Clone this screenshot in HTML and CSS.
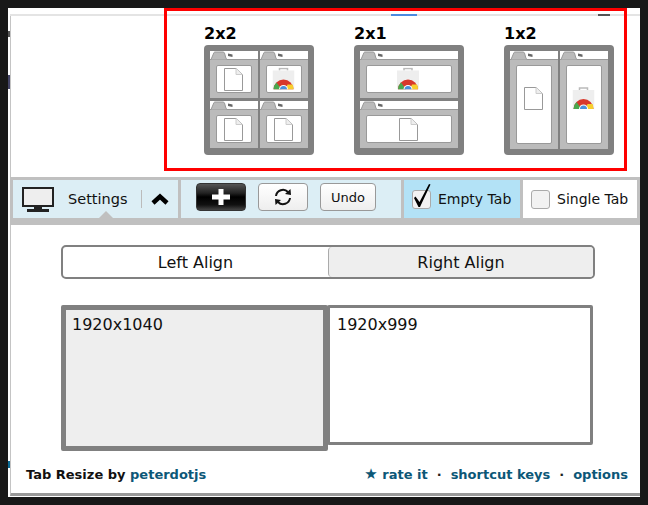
FILE: index.html
```html
<!DOCTYPE html>
<html>
<head>
  <title>Tab Resize</title>
  <link rel="stylesheet" href="styles.css">
</head>
<body>
  <svg class="defs" width="0" height="0">
    <symbol id="head" viewBox="0 0 48 9" width="48" height="9">
      <rect width="48" height="9" fill="#fff"/>
      <rect y="8" width="48" height="1" fill="#999"/>
      <path d="M0 9 L1 8.5 L4 1.5 Q4.5 1 5 1 L13 1 Q14 1 14.5 2 L16 7.5 L18 9 Z" fill="#bbb" stroke="#999"/>
      <path d="M18 2.500 L22.500 3.500 L22.500 6 L18 5 Z" fill="#666"/>
    </symbol>
    <symbol id="page" viewBox="0 0 19 23" width="19" height="23">
      <path d="M.5 .5 H12 L18.5 6.5 V22.5 H.5 Z" fill="#fff" stroke="#999"/>
      <path d="M12 .5 V6.5 H18.5" fill="#eee" stroke="#ccc"/>
    </symbol>
    <symbol id="store" viewBox="0 0 22 22" width="22" height="22">
      <path d="M7 3 V1 H15 V3" fill="none" stroke="#bbb" stroke-width="1.5"/>
      <rect y="3" width="22" height="19" fill="#eee"/>
      <path d="M1 22 A10 10 0 0 1 21 22 Z" fill="#d8382c"/>
      <path d="M1 22 A10 10 0 0 1 4 15 L9 22 Z" fill="#4aa84e"/>
      <path d="M21 22 H13 L15 17 H20 Q21 19 21 22 Z" fill="#f7cf2e"/>
      <path d="M6.5 22 A4.5 4.5 0 0 1 15.5 22 Z" fill="#fff"/>
      <path d="M7.5 22 A3.5 3.5 0 0 1 14.5 22 Z" fill="#4a90dc"/>
    </symbol>
    <symbol id="pane" viewBox="0 0 48 47" width="48" height="47">
      <rect width="48" height="47" fill="#bbb"/>
      <use href="#head"/>
      <rect x="6.5" y="14.5" width="35" height="27" rx="1.5" fill="#fff" stroke="#999"/>
    </symbol>
    <symbol id="wide" viewBox="0 0 98 47" width="98" height="47">
      <rect width="98" height="47" fill="#bbb"/>
      <rect width="98" height="9" fill="#fff"/>
      <rect y="8" width="98" height="1" fill="#999"/>
      <use href="#head"/>
      <rect x="6.5" y="14.5" width="85" height="27" rx="1.5" fill="#fff" stroke="#999"/>
    </symbol>
    <symbol id="tall" viewBox="0 0 48 98" width="48" height="98">
      <rect width="48" height="98" fill="#bbb"/>
      <use href="#head"/>
      <rect x="6.5" y="14.5" width="35" height="78" rx="1.5" fill="#fff" stroke="#999"/>
    </symbol>
  </svg>

  <div class="screen">
    <div class="sliver sliver-a"></div>
    <div class="sliver sliver-b"></div>
    <div class="sliver sliver-c"></div>
    <div class="tab-strip">
      <span class="strip-blue"></span>
      <span class="strip-dark"></span>
    </div>

    <div class="popup">
      <div class="layouts">
        <div class="layout">
          <div class="layout-name">2x2</div>
          <svg class="mini" viewBox="0 0 110 110" width="110" height="110">
            <rect width="110" height="110" rx="4" fill="#808080"/>
            <use href="#pane" x="6" y="6"/>
            <use href="#pane" x="56" y="6"/>
            <use href="#pane" x="6" y="56"/>
            <use href="#pane" x="56" y="56"/>
            <use href="#page" x="20" y="23"/>
            <use href="#store" x="68.500" y="22.500"/>
            <use href="#page" x="20" y="73"/>
            <use href="#page" x="70" y="73"/>
          </svg>
        </div>
        <div class="layout">
          <div class="layout-name">2x1</div>
          <svg class="mini" viewBox="0 0 110 110" width="110" height="110">
            <rect width="110" height="110" rx="4" fill="#808080"/>
            <use href="#wide" x="6" y="6"/>
            <use href="#wide" x="6" y="56"/>
            <use href="#store" x="43" y="22.500"/>
            <use href="#page" x="45" y="73"/>
          </svg>
        </div>
        <div class="layout">
          <div class="layout-name">1x2</div>
          <svg class="mini" viewBox="0 0 110 110" width="110" height="110">
            <rect width="110" height="110" rx="4" fill="#808080"/>
            <use href="#tall" x="6" y="6"/>
            <use href="#tall" x="56" y="6"/>
            <use href="#page" x="20" y="42"/>
            <use href="#store" x="68.500" y="42"/>
          </svg>
        </div>
      </div>

      <div class="toolbar">
        <div class="cell cell-settings">
          <svg class="monitor" viewBox="0 0 32 25" width="32" height="25">
            <rect x="1" y="1" width="30" height="18" fill="#eee" stroke="#222" stroke-width="2"/>
            <rect x="12" y="19" width="8" height="3" fill="#222"/>
            <rect x="5" y="22" width="22" height="3" fill="#222"/>
          </svg>
          <span class="settings-label">Settings</span>
          <span class="settings-sep"></span>
          <svg class="chevron" viewBox="0 0 18 12" width="18" height="12">
            <path d="M2 10 L9 3.500 L16 10" fill="none" stroke="#000" stroke-width="4.500"/>
          </svg>
          <span class="notch"></span>
        </div>
        <div class="cell cell-actions">
          <button class="btn btn-add">
            <svg viewBox="0 0 18 16" width="18" height="16"><path d="M6.500 0 H11.500 V5.500 H18 V10.500 H11.500 V16 H6.500 V10.500 H0 V5.500 H6.500 Z" fill="#fff"/></svg>
          </button>
          <button class="btn btn-reload">
            <svg viewBox="0 0 18 18" width="18" height="18">
              <path d="M2 8 A7 7 0 0 1 14 4" fill="none" stroke="#111" stroke-width="2"/>
              <path d="M11 6 L17 7 L16.500 1 Z" fill="#111"/>
              <path d="M16 10 A7 7 0 0 1 4 14" fill="none" stroke="#111" stroke-width="2"/>
              <path d="M7 12 L1 11 L1.500 17 Z" fill="#111"/>
            </svg>
          </button>
          <button class="btn btn-undo">Undo</button>
        </div>
        <div class="cell cell-check cell-on">
          <span class="checkbox">
            <svg class="tick" viewBox="0 0 20 24" width="20" height="24"><path d="M2 14 L3.500 12.500 L7.500 18 L17 0 L18.500 0.500 L8 23 L6.500 23 Z" fill="#000"/></svg>
          </span>
          <span>Empty Tab</span>
        </div>
        <div class="cell cell-check cell-off">
          <span class="checkbox"></span>
          <span>Single Tab</span>
        </div>
      </div>

      <div class="content">
        <div class="align-row">
          <div class="align-btn align-left">Left Align</div>
          <div class="align-btn align-right">Right Align</div>
        </div>
        <div class="sizes">
          <div class="size size-active">1920x1040</div>
          <div class="size">1920x999</div>
        </div>
      </div>

      <div class="footer">
        <div class="credit">Tab Resize by <a class="link">peterdotjs</a></div>
        <div class="links">
          <a class="link"><span class="star">★</span> rate it</a>
          <span class="dot">·</span>
          <a class="link">shortcut keys</a>
          <span class="dot">·</span>
          <a class="link">options</a>
        </div>
      </div>
    </div>

    <div class="highlight"></div>
  </div>
</body>
</html>
```

FILE: styles.css
```css
* {
  box-sizing: border-box;
}
html, body {
  height: 100%;
}
body {
  margin: 0;
  padding: 8px;
  overflow: hidden;
  background-color: #181818;
  font-family: "DejaVu Sans", Verdana, sans-serif;
  color: #111;
}
.defs {
  position: absolute;
}
.screen {
  position: relative;
  width: 632px;
  height: 489px;
  background-color: #fff;
}

/* bits of the page behind the popup */
.sliver {
  position: absolute;
  left: 0;
  width: 2px;
}
.sliver-a {
  top: 23px;
  height: 6px;
  background-color: #555;
}
.sliver-b {
  top: 67px;
  height: 14px;
  background-color: #446;
}
.sliver-c {
  top: 453px;
  height: 7px;
  background-color: #0b6a94;
}
.tab-strip {
  position: absolute;
  left: 2px;
  right: 0;
  top: 6px;
  height: 2px;
  background-color: #e4e4e4;
}
.strip-blue {
  position: absolute;
  left: 381px;
  width: 26px;
  height: 2px;
  background-color: #4c8be0;
}
.strip-dark {
  position: absolute;
  left: 588px;
  width: 12px;
  height: 2px;
  background-color: #555;
}

.popup {
  position: absolute;
  left: 2px;
  top: 8px;
  width: 630px;
  height: 480px;
  background-color: #fff;
  border-left: 1px solid #c4c4c4;
  border-bottom: 3px solid #999;
}
.layouts {
  display: flex;
  height: 161px;
  padding: 8px 0 0 193px;
  gap: 40px;
}
.layout-name {
  height: 21px;
  font-size: 16px;
  font-weight: bold;
  line-height: 19px;
  color: #000;
}
.mini {
  display: block;
}

.toolbar {
  display: flex;
  height: 48px;
  gap: 3px;
  padding: 3px 2px 7px 3px;
  margin-left: -1px;
  background-color: #c0c0c0;
}
.cell {
  display: flex;
  align-items: center;
  background-color: #dceef5;
}
.cell-settings {
  position: relative;
  width: 165px;
  padding-left: 9px;
}
.monitor {
  margin-right: 14px;
}
.settings-label {
  font-size: 14.500px;
  color: #111;
}
.settings-sep {
  width: 1px;
  height: 18px;
  margin: 0 9px 0 14px;
  background-color: #bbb;
}
.notch {
  position: absolute;
  left: 86px;
  bottom: 0;
  border-left: 7px solid transparent;
  border-right: 7px solid transparent;
  border-bottom: 7px solid #c0c0c0;
}
.cell-actions {
  width: 220px;
  gap: 12px;
  padding-left: 15px;
  padding-bottom: 4px;
}
.btn {
  display: flex;
  align-items: center;
  justify-content: center;
  height: 28px;
  padding: 0;
  border: 1px solid #999;
  border-radius: 4px;
  background: linear-gradient(#fff, #eee);
  font-family: inherit;
  font-size: 13px;
  color: #111;
}
.btn-add {
  width: 50px;
  border-color: #333;
  background: linear-gradient(#555 0, #222 35%, #000 50%, #111 80%, #444 100%);
}
.btn-reload {
  width: 50px;
}
.btn-undo {
  width: 56px;
}
.cell-check {
  width: 116px;
  gap: 7px;
  padding-left: 8px;
  font-size: 14px;
}
.cell-on {
  background-color: #b3e2f6;
}
.cell-off {
  width: 114px;
  background-color: #fff;
}
.checkbox {
  position: relative;
  width: 19px;
  height: 19px;
  margin-top: 1px;
  border: 1px solid #aaa;
  border-radius: 3px;
  background-color: #f2f2f2;
}
.tick {
  position: absolute;
  left: -1px;
  top: -7px;
}

.content {
  padding: 20px 0 0 50px;
}
.align-row {
  display: flex;
  width: 534px;
  height: 34px;
  border: 2.500px solid #808080;
  border-radius: 5px;
}
.align-btn {
  display: flex;
  align-items: center;
  justify-content: center;
  font-size: 16px;
}
.align-left {
  width: 265px;
}
.align-right {
  flex: 1;
  background-color: #eee;
  border-radius: 4px;
  border-left: 1px solid #aaa;
}
.sizes {
  display: flex;
  align-items: flex-start;
  margin-top: 26px;
}
.size {
  width: 266px;
  height: 140px;
  margin-left: -1px;
  padding: 7px;
  border: 3px solid #808080;
  border-radius: 2px;
  font-size: 16px;
}
.size-active {
  width: 267px;
  height: 146px;
  margin-left: 0;
  padding: 5px 6px;
  border-width: 5px;
  background-color: #eee;
}

.footer {
  position: absolute;
  left: 15px;
  right: 12px;
  bottom: 10px;
  display: flex;
  justify-content: space-between;
  align-items: baseline;
  line-height: 16px;
  font-size: 13px;
  font-weight: bold;
  color: #111;
}
.link {
  color: #0c5777;
}
.links {
  display: flex;
  align-items: baseline;
  gap: 9px;
}
.dot {
  color: #222;
}
.star {
  font-size: 15px;
  line-height: 1;
}

.highlight {
  position: absolute;
  left: 156px;
  top: 0;
  width: 463px;
  height: 163px;
  border: 3px solid #f00;
}
```
